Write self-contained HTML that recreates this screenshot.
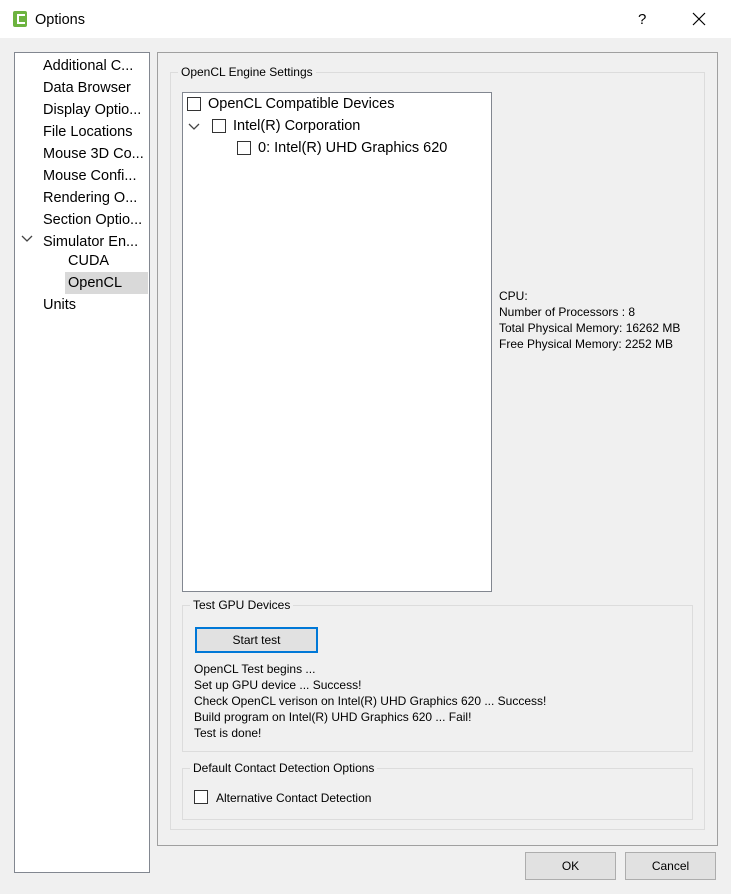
<!DOCTYPE html><html><head><style>
body{margin:0;width:731px;height:894px;background:#f0f0f0;font-family:"Liberation Sans",sans-serif;position:relative;overflow:hidden;color:#000}
.a{position:absolute}
.t15{font-size:14.5px}
.t12{font-size:12px}
.cb{position:absolute;width:12px;height:12px;border:1px solid #333;background:#fff}
.grp{position:absolute;border:1px solid #dcdcdc}
.gl{position:absolute;background:#f0f0f0;padding:0 3px;font-size:12px;top:-8px;left:7px}
.btn{position:absolute;background:#e1e1e1;border:1px solid #adadad;font-size:12px;text-align:center}
</style></head><body>
<div class="a" style="left:0;top:0;width:731px;height:38px;background:#fff"></div>
<div class="a" style="left:13px;top:11px;width:14px;height:16px;background:#6db33f;border-radius:2px"></div>
<div class="a" style="left:17px;top:14px;width:8px;height:10px;border-left:2px solid #fff;border-top:2px solid #fff;border-bottom:2px solid #fff;box-sizing:border-box"></div>
<div class="a t15" style="left:35px;top:12px">Options</div>
<div class="a" style="left:638px;top:11px;font-size:15px">?</div>
<svg class="a" style="left:692px;top:12px" width="14" height="14"><path d="M1 1L13 13M13 1L1 13" stroke="#000" stroke-width="1.2"/></svg>

<div class="a" style="left:14px;top:52px;width:134px;height:819px;background:#fff;border:1px solid #828790"></div>
<div class="a t15" style="left:43px;top:55px;line-height:22px">Additional C...<br>Data Browser<br>Display Optio...<br>File Locations<br>Mouse 3D Co...<br>Mouse Confi...<br>Rendering O...<br>Section Optio...<br>Simulator En...</div>
<svg class="a" style="left:21px;top:235px" width="12" height="8"><path d="M1 1L6 6L11 1" fill="none" stroke="#444" stroke-width="1.3"/></svg>
<div class="a t15" style="left:68px;top:253px">CUDA</div>
<div class="a" style="left:65px;top:272px;width:83px;height:22px;background:#d9d9d9"></div>
<div class="a t15" style="left:68px;top:275px">OpenCL</div>
<div class="a t15" style="left:43px;top:297px">Units</div>

<div class="a" style="left:157px;top:52px;width:559px;height:792px;border:1px solid #a0a0a0"></div>
<div class="grp" style="left:170px;top:72px;width:533px;height:756px"><div class="gl">OpenCL Engine Settings</div></div>
<div class="a" style="left:182px;top:92px;width:308px;height:498px;background:#fff;border:1px solid #828790"></div>
<div class="cb" style="left:187px;top:97px"></div><div class="a t15" style="left:208px;top:96px">OpenCL Compatible Devices</div>
<svg class="a" style="left:188px;top:123px" width="12" height="8"><path d="M1 1L6 6L11 1" fill="none" stroke="#444" stroke-width="1.3"/></svg>
<div class="cb" style="left:212px;top:119px"></div><div class="a t15" style="left:233px;top:118px">Intel(R) Corporation</div>
<div class="cb" style="left:237px;top:141px"></div><div class="a t15" style="left:258px;top:140px">0: Intel(R) UHD Graphics 620</div>
<div class="a t12" style="left:499px;top:288px;line-height:16px">CPU:<br>Number of Processors : 8<br>Total Physical Memory: 16262 MB<br>Free Physical Memory: 2252 MB</div>

<div class="grp" style="left:182px;top:605px;width:509px;height:145px"><div class="gl">Test GPU Devices</div></div>
<div class="btn" style="left:195px;top:627px;width:119px;height:22px;line-height:22px;border:2px solid #0078d7">Start test</div>
<div class="a t12" style="left:194px;top:661px;line-height:16px">OpenCL Test begins ...<br>Set up GPU device ... Success!<br>Check OpenCL verison on Intel(R) UHD Graphics 620 ... Success!<br>Build program on Intel(R) UHD Graphics 620 ... Fail!<br>Test is done!</div>

<div class="grp" style="left:182px;top:768px;width:509px;height:50px"><div class="gl">Default Contact Detection Options</div></div>
<div class="cb" style="left:194px;top:790px"></div><div class="a t12" style="left:216px;top:791px">Alternative Contact Detection</div>

<div class="btn" style="left:525px;top:852px;width:89px;height:26px;line-height:26px">OK</div>
<div class="btn" style="left:625px;top:852px;width:89px;height:26px;line-height:26px">Cancel</div>
</body></html>
